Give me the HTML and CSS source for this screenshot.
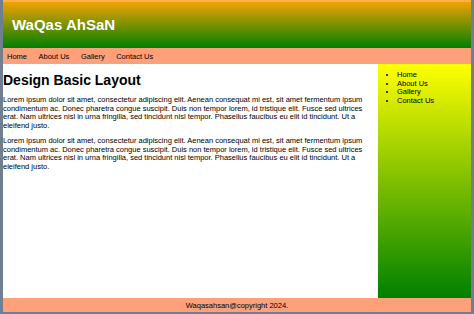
FILE: index.html
```html
<!DOCTYPE html>
<html>
<head>
<meta charset="utf-8">
<link rel="stylesheet" href="styles.css">
</head>
<body>
<div class="page">
  <header class="header"><h1 class="title">WaQas AhSaN</h1></header>
  <nav class="nav">
    <a class="nav-link">Home</a>
    <a class="nav-link">About Us</a>
    <a class="nav-link">Gallery</a>
    <a class="nav-link">Contact Us</a>
  </nav>
  <div class="content">
    <main class="main">
      <h2 class="heading">Design Basic Layout</h2>
      <p class="text">Lorem ipsum dolor sit amet, consectetur adipiscing elit. Aenean consequat mi est, sit amet fermentum ipsum condimentum ac. Donec pharetra congue suscipit. Duis non tempor lorem, id tristique elit. Fusce sed ultrices erat. Nam ultrices nisl in urna fringilla, sed tincidunt nisl tempor. Phasellus faucibus eu elit id tincidunt. Ut a eleifend justo.</p>
      <p class="text">Lorem ipsum dolor sit amet, consectetur adipiscing elit. Aenean consequat mi est, sit amet fermentum ipsum condimentum ac. Donec pharetra congue suscipit. Duis non tempor lorem, id tristique elit. Fusce sed ultrices erat. Nam ultrices nisl in urna fringilla, sed tincidunt nisl tempor. Phasellus faucibus eu elit id tincidunt. Ut a eleifend justo.</p>
    </main>
    <aside class="side">
      <ul class="side-list">
        <li>Home</li>
        <li>About Us</li>
        <li>Gallery</li>
        <li>Contact Us</li>
      </ul>
    </aside>
  </div>
  <footer class="footer">Waqasahsan@copyright 2024.</footer>
</div>
</body>
</html>
```

FILE: styles.css
```css
html, body {
  margin: 0;
  padding: 0;
  background: #6f7f8f;
  font-family: "Liberation Sans", Arial, sans-serif;
  color: #000;
}
.page {
  margin: 0 3px 2px 3px;
  height: 312px;
  display: flex;
  flex-direction: column;
}
.header {
  height: 48px;
  flex: none;
  background: linear-gradient(#fbb24a 0, #fbb24a 2px, #f2a200 2px, #008000 100%);
  display: flex;
  align-items: center;
  padding-left: 9px;
}
.title {
  margin: 0;
  font-size: 15px;
  font-weight: bold;
  color: #fff;
}
.nav {
  height: 16px;
  flex: none;
  background: #ffa07a;
  display: flex;
  align-items: center;
  padding-left: 4px;
  gap: 11.5px;
  font-size: 7.5px;
}
.nav-link {
  color: #000;
}
.content {
  flex: 1;
  display: flex;
}
.main {
  flex: 1;
  background: #fff;
}
.heading {
  margin: 8px 0 0 0;
  font-size: 14px;
  font-weight: bold;
}
.text {
  font-size: 7.5px;
  line-height: 8.7px;
  margin: 6px 0 0 0;
}
.heading + .text {
  margin-top: 8px;
}
.side {
  width: 93px;
  flex: none;
  background: linear-gradient(#ffff00, #008000);
}
.side-list {
  margin: 7px 0 0 0;
  padding-left: 19px;
  font-size: 7.5px;
  line-height: 8.5px;
}
.footer {
  height: 14px;
  flex: none;
  background: #ffa07a;
  font-size: 7.5px;
  display: flex;
  align-items: center;
  justify-content: center;
}
```
